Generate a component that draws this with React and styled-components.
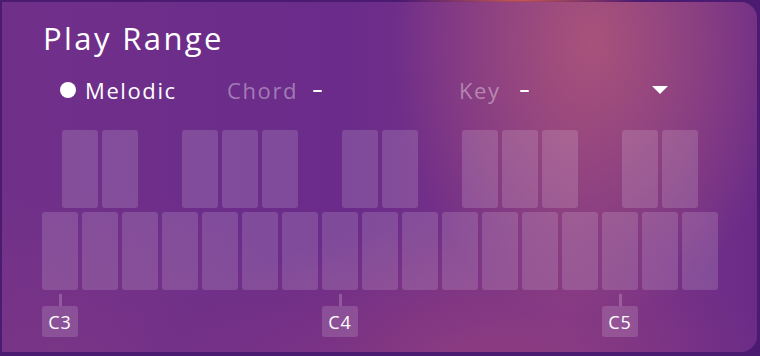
import * as React from 'react';
import styled, {createGlobalStyle} from 'styled-components';

const GlobalStyle = createGlobalStyle`
  html, body {
    margin: 0;
    padding: 0;
    width: 760px;
    height: 356px;
    overflow: hidden;
    font-family: 'Open Sans', 'Noto Sans', sans-serif;
  }
  body {
    background:
      radial-gradient(ellipse 120px 6px at 520px 0px, rgba(214, 96, 80, 0.9), rgba(214, 96, 80, 0) 100%),
      #4b1b72;
  }
`;

const Panel = styled.div`
  box-sizing: border-box;
  margin: 2px 3px 0 2px;
  height: 350px;
  border-radius: 0 16px 16px 0;
  padding: 20px 0 0 40px;
  display: flex;
  flex-direction: column;
  background:
    radial-gradient(ellipse 200px 280px at 590px 40px, rgba(170, 84, 122, 0.95), rgba(170, 84, 122, 0) 100%),
    radial-gradient(ellipse 300px 140px at 470px 360px, rgba(150, 64, 124, 0.7), rgba(150, 64, 124, 0) 100%),
    radial-gradient(ellipse 260px 180px at 60px 360px, rgba(128, 56, 130, 0.6), rgba(128, 56, 130, 0) 100%),
    linear-gradient(90deg, #70308a 0%, #6a2b8a 45%, #7d3586 75%, #6a2b88 100%);
`;

const Title = styled.h1`
  margin: 0;
  padding-left: 1px;
  font-size: 31px;
  font-weight: 400;
  line-height: 32px;
  color: #fff;
  letter-spacing: 2.4px;
`;

const Controls = styled.div`
  display: grid;
  grid-template-columns: 167px 232px 193px 16px;
  align-items: center;
  height: 32px;
  margin-top: 20px;
  padding-left: 18px;
`;

const Group = styled.div`
  display: flex;
  align-items: center;
  gap: ${(p) => p.gap || 10}px;
`;

const Dot = styled.span`
  width: 16px;
  height: 16px;
  border-radius: 50%;
  background: #fff;
`;

const Label = styled.span`
  font-size: 22px;
  line-height: 32px;
  letter-spacing: 1.6px;
  color: ${(p) => (p.dim ? 'rgba(255, 255, 255, 0.38)' : '#fff')};
`;

const Dash = styled.span`
  width: 9px;
  height: 2px;
  margin-top: 1px;
  background: #fff;
  border-radius: 1px;
`;

const Caret = styled.svg`
  width: 16px;
  height: 8px;
  display: block;
`;

const Keyboard = styled.div`
  display: flex;
  flex-direction: column;
  gap: 4px;
  margin-top: 24px;
`;

const KeyRow = styled.div`
  display: grid;
  grid-template-columns: repeat(${(p) => p.count}, 36px);
  gap: 4px;
  padding-left: ${(p) => p.offset || 0}px;
`;

const Key = styled.div`
  height: 78px;
  border-radius: 3px;
  background: ${(p) => (p.empty ? 'transparent' : 'rgba(255, 255, 255, 0.15)')};
`;

const Markers = styled.div`
  display: grid;
  grid-template-columns: repeat(17, 36px);
  gap: 4px;
`;

const Marker = styled.div`
  display: flex;
  flex-direction: column;
  align-items: center;
  grid-column: ${(p) => p.col};
`;

const Stem = styled.div`
  width: 3px;
  height: 12px;
  margin-top: 4px;
  background: rgba(255, 255, 255, 0.2);
`;

const Tag = styled.div`
  width: 36px;
  height: 31px;
  border-radius: 3px;
  background: rgba(255, 255, 255, 0.15);
  color: #fff;
  font-size: 18px;
  letter-spacing: 1px;
  display: flex;
  align-items: center;
  justify-content: center;
`;

const blackPattern = [1, 1, 0, 1, 1, 1, 0, 1, 1, 0, 1, 1, 1, 0, 1, 1];

export default function App() {
  return (
    <>
      <GlobalStyle />
      <Panel>
        <Title>Play Range</Title>
        <Controls>
          <Group gap={9}>
            <Dot />
            <Label>Melodic</Label>
          </Group>
          <Group gap={15}>
            <Label dim>Chord</Label>
            <Dash />
          </Group>
          <Group gap={19}>
            <Label dim>Key</Label>
            <Dash />
          </Group>
          <Caret viewBox="0 0 16 8">
            <path d="M0 0 H16 L8 8 Z" fill="#fff" />
          </Caret>
        </Controls>
        <Keyboard>
          <KeyRow count={16} offset={20}>
            {blackPattern.map((b, i) => (
              <Key key={i} empty={!b} />
            ))}
          </KeyRow>
          <KeyRow count={17}>
            {Array.from({length: 17}).map((_, i) => (
              <Key key={i} />
            ))}
          </KeyRow>
        </Keyboard>
        <Markers>
          {[['C3', 1], ['C4', 8], ['C5', 15]].map(([n, c]) => (
            <Marker key={n} col={c}>
              <Stem />
              <Tag>{n}</Tag>
            </Marker>
          ))}
        </Markers>
      </Panel>
    </>
  );
}
